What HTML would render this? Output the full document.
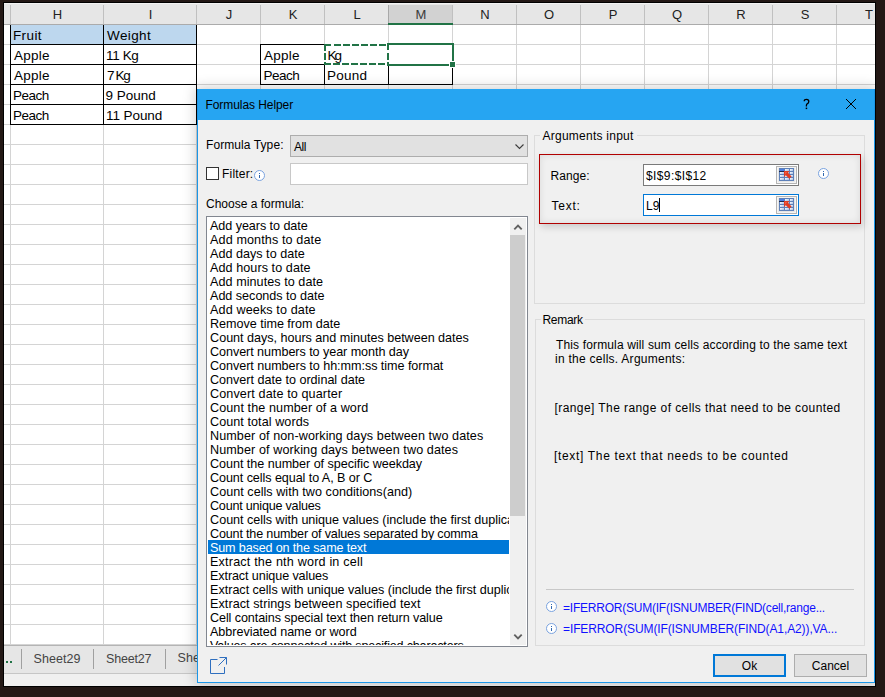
<!DOCTYPE html><html><head><meta charset="utf-8"><style>
html,body{margin:0;padding:0;width:885px;height:697px;overflow:hidden;background:#231815}
body{position:relative;font-family:"Liberation Sans", sans-serif}
body div{position:absolute;box-sizing:border-box}
.t{white-space:pre}
</style></head><body>
<div style="left:4px;top:3px;width:871px;height:683px;background:#fff"></div><div style="left:4px;top:3px;width:871px;height:21px;background:#e6e6e6"></div><div style="left:4px;top:3px;width:871px;height:1px;background:#f3f3f3"></div><div style="left:4px;top:24px;width:871px;height:1px;background:#ababab"></div><div style="left:388px;top:5px;width:65px;height:18px;background:#d2d2d2"></div><div style="left:10px;top:5px;width:1px;height:19px;background:#c0c0c0"></div><div style="left:103px;top:5px;width:1px;height:19px;background:#c0c0c0"></div><div style="left:196px;top:5px;width:1px;height:19px;background:#c0c0c0"></div><div style="left:260px;top:5px;width:1px;height:19px;background:#c0c0c0"></div><div style="left:324px;top:5px;width:1px;height:19px;background:#c0c0c0"></div><div style="left:388px;top:5px;width:1px;height:19px;background:#c0c0c0"></div><div style="left:452px;top:5px;width:1px;height:19px;background:#c0c0c0"></div><div style="left:516px;top:5px;width:1px;height:19px;background:#c0c0c0"></div><div style="left:580px;top:5px;width:1px;height:19px;background:#c0c0c0"></div><div style="left:644px;top:5px;width:1px;height:19px;background:#c0c0c0"></div><div style="left:708px;top:5px;width:1px;height:19px;background:#c0c0c0"></div><div style="left:772px;top:5px;width:1px;height:19px;background:#c0c0c0"></div><div style="left:836px;top:5px;width:1px;height:19px;background:#c0c0c0"></div><div style="left:4px;top:44px;width:871px;height:1px;background:#d4d4d4"></div><div style="left:4px;top:64px;width:871px;height:1px;background:#d4d4d4"></div><div style="left:4px;top:84px;width:871px;height:1px;background:#d4d4d4"></div><div style="left:4px;top:104px;width:871px;height:1px;background:#d4d4d4"></div><div style="left:4px;top:124px;width:871px;height:1px;background:#d4d4d4"></div><div style="left:4px;top:144px;width:871px;height:1px;background:#d4d4d4"></div><div style="left:4px;top:164px;width:871px;height:1px;background:#d4d4d4"></div><div style="left:4px;top:184px;width:871px;height:1px;background:#d4d4d4"></div><div style="left:4px;top:204px;width:871px;height:1px;background:#d4d4d4"></div><div style="left:4px;top:224px;width:871px;height:1px;background:#d4d4d4"></div><div style="left:4px;top:244px;width:871px;height:1px;background:#d4d4d4"></div><div style="left:4px;top:264px;width:871px;height:1px;background:#d4d4d4"></div><div style="left:4px;top:284px;width:871px;height:1px;background:#d4d4d4"></div><div style="left:4px;top:304px;width:871px;height:1px;background:#d4d4d4"></div><div style="left:4px;top:324px;width:871px;height:1px;background:#d4d4d4"></div><div style="left:4px;top:344px;width:871px;height:1px;background:#d4d4d4"></div><div style="left:4px;top:364px;width:871px;height:1px;background:#d4d4d4"></div><div style="left:4px;top:384px;width:871px;height:1px;background:#d4d4d4"></div><div style="left:4px;top:404px;width:871px;height:1px;background:#d4d4d4"></div><div style="left:4px;top:424px;width:871px;height:1px;background:#d4d4d4"></div><div style="left:4px;top:444px;width:871px;height:1px;background:#d4d4d4"></div><div style="left:4px;top:464px;width:871px;height:1px;background:#d4d4d4"></div><div style="left:4px;top:484px;width:871px;height:1px;background:#d4d4d4"></div><div style="left:4px;top:504px;width:871px;height:1px;background:#d4d4d4"></div><div style="left:4px;top:524px;width:871px;height:1px;background:#d4d4d4"></div><div style="left:4px;top:544px;width:871px;height:1px;background:#d4d4d4"></div><div style="left:4px;top:564px;width:871px;height:1px;background:#d4d4d4"></div><div style="left:4px;top:584px;width:871px;height:1px;background:#d4d4d4"></div><div style="left:4px;top:604px;width:871px;height:1px;background:#d4d4d4"></div><div style="left:4px;top:624px;width:871px;height:1px;background:#d4d4d4"></div><div style="left:4px;top:644px;width:871px;height:1px;background:#d4d4d4"></div><div style="left:10px;top:25px;width:1px;height:620px;background:#d4d4d4"></div><div style="left:103px;top:25px;width:1px;height:620px;background:#d4d4d4"></div><div style="left:196px;top:25px;width:1px;height:620px;background:#d4d4d4"></div><div style="left:260px;top:25px;width:1px;height:620px;background:#d4d4d4"></div><div style="left:324px;top:25px;width:1px;height:620px;background:#d4d4d4"></div><div style="left:388px;top:25px;width:1px;height:620px;background:#d4d4d4"></div><div style="left:452px;top:25px;width:1px;height:620px;background:#d4d4d4"></div><div style="left:516px;top:25px;width:1px;height:620px;background:#d4d4d4"></div><div style="left:580px;top:25px;width:1px;height:620px;background:#d4d4d4"></div><div style="left:644px;top:25px;width:1px;height:620px;background:#d4d4d4"></div><div style="left:708px;top:25px;width:1px;height:620px;background:#d4d4d4"></div><div style="left:772px;top:25px;width:1px;height:620px;background:#d4d4d4"></div><div style="left:836px;top:25px;width:1px;height:620px;background:#d4d4d4"></div><div style="left:388px;top:23px;width:65px;height:2px;background:#217346"></div><div style="left:388px;top:5px;width:1px;height:18px;background:#a8a8a8"></div><div class="t" style="left:11px;top:7px;width:93px;text-align:center;font-size:13px;line-height:15px;color:#222">H</div><div class="t" style="left:104px;top:7px;width:93px;text-align:center;font-size:13px;line-height:15px;color:#222">I</div><div class="t" style="left:197px;top:7px;width:64px;text-align:center;font-size:13px;line-height:15px;color:#222">J</div><div class="t" style="left:261px;top:7px;width:64px;text-align:center;font-size:13px;line-height:15px;color:#222">K</div><div class="t" style="left:325px;top:7px;width:64px;text-align:center;font-size:13px;line-height:15px;color:#222">L</div><div class="t" style="left:389px;top:7px;width:64px;text-align:center;font-size:13px;line-height:15px;color:#3a3a3a">M</div><div class="t" style="left:453px;top:7px;width:64px;text-align:center;font-size:13px;line-height:15px;color:#222">N</div><div class="t" style="left:517px;top:7px;width:64px;text-align:center;font-size:13px;line-height:15px;color:#222">O</div><div class="t" style="left:581px;top:7px;width:64px;text-align:center;font-size:13px;line-height:15px;color:#222">P</div><div class="t" style="left:645px;top:7px;width:64px;text-align:center;font-size:13px;line-height:15px;color:#222">Q</div><div class="t" style="left:709px;top:7px;width:64px;text-align:center;font-size:13px;line-height:15px;color:#222">R</div><div class="t" style="left:773px;top:7px;width:64px;text-align:center;font-size:13px;line-height:15px;color:#222">S</div><div class="t" style="left:837px;top:7px;width:64px;text-align:center;font-size:13px;line-height:15px;color:#222">T</div><div style="left:11px;top:25px;width:185px;height:19px;background:#bdd7ee"></div><div style="left:10px;top:25px;width:1px;height:100px;background:#000"></div><div style="left:103px;top:25px;width:1px;height:100px;background:#000"></div><div style="left:196px;top:25px;width:1px;height:100px;background:#000"></div><div style="left:10px;top:44px;width:187px;height:1px;background:#000"></div><div style="left:10px;top:64px;width:187px;height:1px;background:#000"></div><div style="left:10px;top:84px;width:187px;height:1px;background:#000"></div><div style="left:10px;top:104px;width:187px;height:1px;background:#000"></div><div style="left:10px;top:124px;width:187px;height:1px;background:#000"></div><div class="t" id="t0" style="left:13.00px;top:29px;font-size:13.5px;line-height:13.5px;color:#000;letter-spacing:0.375px;">Fruit</div><div class="t" id="t1" style="left:107.00px;top:29px;font-size:13.5px;line-height:13.5px;color:#000;letter-spacing:0.400px;">Weight</div><div class="t" id="t2" style="left:14.00px;top:49px;font-size:13.5px;line-height:13.5px;color:#000;letter-spacing:0.250px;">Apple</div><div class="t" id="t3" style="left:106.00px;top:49px;font-size:13.5px;line-height:13.5px;color:#000;letter-spacing:-0.375px;">11 Kg</div><div class="t" id="t4" style="left:14.00px;top:69px;font-size:13.5px;line-height:13.5px;color:#000;letter-spacing:0.250px;">Apple</div><div class="t" id="t5" style="left:107.00px;top:69px;font-size:13.5px;line-height:13.5px;color:#000;letter-spacing:-1.333px;">7 Kg</div><div class="t" id="t6" style="left:13.00px;top:89px;font-size:13.5px;line-height:13.5px;color:#000;letter-spacing:-0.500px;">Peach</div><div class="t" id="t7" style="left:105.50px;top:89px;font-size:13.5px;line-height:13.5px;color:#000;letter-spacing:-0.000px;">9 Pound</div><div class="t" id="t8" style="left:13.00px;top:109px;font-size:13.5px;line-height:13.5px;color:#000;letter-spacing:-0.500px;">Peach</div><div class="t" id="t9" style="left:106.00px;top:109px;font-size:13.5px;line-height:13.5px;color:#000;letter-spacing:-0.071px;">11 Pound</div><div style="left:260px;top:44px;width:1px;height:41px;background:#000"></div><div style="left:324px;top:44px;width:1px;height:41px;background:#000"></div><div style="left:388px;top:44px;width:1px;height:41px;background:#000"></div><div style="left:452px;top:44px;width:1px;height:41px;background:#000"></div><div style="left:260px;top:44px;width:193px;height:1px;background:#000"></div><div style="left:260px;top:64px;width:193px;height:1px;background:#000"></div><div style="left:260px;top:84px;width:193px;height:1px;background:#000"></div><div class="t" id="t10" style="left:264.00px;top:49px;font-size:13.5px;line-height:13.5px;color:#000;letter-spacing:0.250px;">Apple</div><div class="t" id="t11" style="left:327.50px;top:49px;font-size:13.5px;line-height:13.5px;color:#000;letter-spacing:-2.000px;">Kg</div><div class="t" id="t12" style="left:263.50px;top:69px;font-size:13.5px;line-height:13.5px;color:#000;letter-spacing:-0.500px;">Peach</div><div class="t" id="t13" style="left:327.00px;top:69px;font-size:13.5px;line-height:13.5px;color:#000;letter-spacing:0.250px;">Pound</div><div style="left:324px;top:44px;width:64px;height:2px;background:#fff"></div><div style="left:324px;top:63px;width:64px;height:2px;background:#fff"></div><div style="left:324px;top:44px;width:2px;height:21px;background:#fff"></div><div style="left:387px;top:44px;width:2px;height:21px;background:#fff"></div><div style="left:389px;top:43px;width:65px;height:2px;background:#217346"></div><div style="left:389px;top:64px;width:60px;height:2px;background:#217346"></div><div style="left:452px;top:43px;width:2px;height:18px;background:#217346"></div><div style="left:449px;top:61px;width:7px;height:7px;background:#fff"></div><div style="left:450px;top:62px;width:5px;height:5px;background:#217346"></div><div style="left:324px;top:44px;width:7px;height:2px;background:#217346"></div><div style="left:334px;top:44px;width:7px;height:2px;background:#217346"></div><div style="left:343px;top:44px;width:7px;height:2px;background:#217346"></div><div style="left:352px;top:44px;width:7px;height:2px;background:#217346"></div><div style="left:361px;top:44px;width:7px;height:2px;background:#217346"></div><div style="left:370px;top:44px;width:7px;height:2px;background:#217346"></div><div style="left:379px;top:44px;width:7px;height:2px;background:#217346"></div><div style="left:324px;top:63px;width:7px;height:2px;background:#217346"></div><div style="left:333px;top:63px;width:7px;height:2px;background:#217346"></div><div style="left:342px;top:63px;width:7px;height:2px;background:#217346"></div><div style="left:351px;top:63px;width:7px;height:2px;background:#217346"></div><div style="left:360px;top:63px;width:7px;height:2px;background:#217346"></div><div style="left:369px;top:63px;width:7px;height:2px;background:#217346"></div><div style="left:378px;top:63px;width:7px;height:2px;background:#217346"></div><div style="left:387px;top:63px;width:1px;height:2px;background:#217346"></div><div style="left:324px;top:44px;width:2px;height:7px;background:#217346"></div><div style="left:324px;top:53px;width:2px;height:7px;background:#217346"></div><div style="left:324px;top:62px;width:2px;height:3px;background:#217346"></div><div style="left:387px;top:43px;width:2px;height:7px;background:#217346"></div><div style="left:387px;top:53px;width:2px;height:7px;background:#217346"></div><div style="left:387px;top:62px;width:2px;height:4px;background:#217346"></div><div style="left:4px;top:645px;width:871px;height:1px;background:#b4b4b4"></div><div style="left:4px;top:646px;width:871px;height:27px;background:#e6e6e6"></div><div style="left:4px;top:673px;width:871px;height:1px;background:#c6c6c6"></div><div style="left:4px;top:674px;width:871px;height:12px;background:#f0f0f0"></div><div style="left:21px;top:649px;width:1px;height:20px;background:#a0a0a0"></div><div style="left:93px;top:649px;width:1px;height:20px;background:#a0a0a0"></div><div style="left:165px;top:649px;width:1px;height:20px;background:#a0a0a0"></div><div style="left:6px;top:661px;width:2px;height:2px;background:#217346"></div><div style="left:10px;top:661px;width:2px;height:2px;background:#217346"></div><div class="t" id="t14" style="left:33.50px;top:653px;font-size:12.5px;line-height:12.5px;color:#444;letter-spacing:0.083px;">Sheet29</div><div class="t" id="t15" style="left:106.00px;top:653px;font-size:12.5px;line-height:12.5px;color:#444;letter-spacing:-0.167px;">Sheet27</div><div class="t" style="left:177.50px;top:652px;font-size:12.5px;line-height:12.5px;color:#444;letter-spacing:0.083px">Sheet26</div><div style="left:197px;top:89px;width:678px;height:594px;background:#f0f0f0;box-shadow:0 0 12px 2px rgba(0,0,0,0.18)"></div><div style="left:197px;top:89px;width:678px;height:31px;background:#26a5f2"></div><div style="left:197px;top:89px;width:1px;height:594px;background:#1a96e8"></div><div style="left:874px;top:89px;width:1px;height:594px;background:#1a96e8"></div><div style="left:197px;top:682px;width:678px;height:1px;background:#1a96e8"></div><div class="t" id="t16" style="left:205.50px;top:99px;font-size:12px;line-height:12px;color:#000;letter-spacing:-0.071px;">Formulas Helper</div><svg style="position:absolute;left:800px;top:96px" width="14" height="16"><path d="M4.2 5.2 Q4.3 3.4 6.5 3.4 Q8.8 3.4 8.8 5.6 Q8.8 7.1 7.2 7.9 Q6.4 8.3 6.4 9.4 V10.6" stroke="#000" stroke-width="1.3" fill="none"/><rect x="5.7" y="11.6" width="1.5" height="1.5" fill="#000"/></svg><svg style="position:absolute;left:845px;top:98px" width="12" height="12"><path d="M1 1 L11 11 M11 1 L1 11" stroke="#000" stroke-width="1"/></svg><div class="t" id="t17" style="left:206.00px;top:139px;font-size:12px;line-height:12px;color:#000;letter-spacing:0.083px;">Formula Type:</div><div style="left:290px;top:135px;width:238px;height:22px;background:#e1e1e1;border:1px solid #adadad"></div><div class="t" id="t18" style="left:294.00px;top:141px;font-size:12px;line-height:12px;color:#000;letter-spacing:-0.500px;">All</div><svg style="position:absolute;left:514px;top:143px" width="11" height="7"><path d="M1.5 1.5 L5.5 5.5 L9.5 1.5" stroke="#3c3c3c" stroke-width="1.1" fill="none"/></svg><div style="left:206px;top:167px;width:13px;height:13px;background:#fff;border:1px solid #333"></div><div class="t" style="left:222.00px;top:168px;font-size:12px;line-height:12px;color:#000;letter-spacing:0.2px">Filter:</div><svg style="position:absolute;left:253px;top:169px" width="13" height="13"><circle cx="6.5" cy="6.5" r="5" fill="#fff" stroke="#7aa3e0" stroke-width="1"/><rect x="6" y="4" width="1" height="1" fill="#2f68b0"/><rect x="6" y="6" width="1" height="3" fill="#2f68b0"/></svg><div style="left:290px;top:163px;width:238px;height:22px;background:#fff;border:1px solid #c8c8c8"></div><div class="t" id="t19" style="left:206.00px;top:198px;font-size:12px;line-height:12px;color:#000;letter-spacing:-0.000px;">Choose a formula:</div><div style="left:206px;top:216px;width:322px;height:431px;background:#fff;border:1px solid #828790"></div><div style="left:208px;top:218px;width:301px;height:427px;overflow:hidden"><div class="t" id="t20" style="left:2.00px;top:1px;font-size:12.6px;line-height:14px;color:#000;letter-spacing:-0.062px">Add years to date</div><div class="t" id="t21" style="left:2.00px;top:15px;font-size:12.6px;line-height:14px;color:#000;letter-spacing:0.118px">Add months to date</div><div class="t" id="t22" style="left:2.00px;top:29px;font-size:12.6px;line-height:14px;color:#000;letter-spacing:0.013px">Add days to date</div><div class="t" id="t23" style="left:2.00px;top:43px;font-size:12.6px;line-height:14px;color:#000;letter-spacing:0.069px">Add hours to date</div><div class="t" id="t24" style="left:2.00px;top:57px;font-size:12.6px;line-height:14px;color:#000;letter-spacing:0.056px">Add minutes to date</div><div class="t" id="t25" style="left:2.00px;top:71px;font-size:12.6px;line-height:14px;color:#000;letter-spacing:-0.017px">Add seconds to date</div><div class="t" id="t26" style="left:2.00px;top:85px;font-size:12.6px;line-height:14px;color:#000;letter-spacing:0.125px">Add weeks to date</div><div class="t" id="t27" style="left:2.00px;top:99px;font-size:12.6px;line-height:14px;color:#000;letter-spacing:-0.030px">Remove time from date</div><div class="t" id="list8" style="left:2.10px;top:113px;font-size:12.6px;line-height:14px;color:#000;letter-spacing:-0.024px">Count days, hours and minutes between dates</div><div class="t" id="t28" style="left:2.00px;top:127px;font-size:12.6px;line-height:14px;color:#000;letter-spacing:-0.059px">Convert numbers to year month day</div><div class="t" id="t29" style="left:2.00px;top:141px;font-size:12.6px;line-height:14px;color:#000;letter-spacing:-0.047px">Convert numbers to hh:mm:ss time format</div><div class="t" id="t30" style="left:2.00px;top:155px;font-size:12.6px;line-height:14px;color:#000;letter-spacing:-0.011px">Convert date to ordinal date</div><div class="t" id="t31" style="left:2.00px;top:169px;font-size:12.6px;line-height:14px;color:#000;letter-spacing:0.118px">Convert date to quarter</div><div class="t" id="t32" style="left:2.00px;top:183px;font-size:12.6px;line-height:14px;color:#000;letter-spacing:0.084px">Count the number of a word</div><div class="t" id="t33" style="left:2.00px;top:197px;font-size:12.6px;line-height:14px;color:#000;letter-spacing:0.063px">Count total words</div><div class="t" id="t34" style="left:2.00px;top:211px;font-size:12.6px;line-height:14px;color:#000;letter-spacing:0.086px">Number of non-working days between two dates</div><div class="t" id="t35" style="left:2.00px;top:225px;font-size:12.6px;line-height:14px;color:#000;letter-spacing:0.095px">Number of working days between two dates</div><div class="t" id="t36" style="left:2.00px;top:239px;font-size:12.6px;line-height:14px;color:#000;letter-spacing:-0.040px">Count the number of specific weekday</div><div class="t" id="t37" style="left:2.00px;top:253px;font-size:12.6px;line-height:14px;color:#000;letter-spacing:-0.076px">Count cells equal to A, B or C</div><div class="t" id="t38" style="left:2.00px;top:267px;font-size:12.6px;line-height:14px;color:#000;letter-spacing:0.037px">Count cells with two conditions(and)</div><div class="t" id="t39" style="left:2.00px;top:281px;font-size:12.6px;line-height:14px;color:#000;letter-spacing:-0.222px">Count unique values</div><div class="t" style="left:2.10px;top:295px;font-size:12.6px;line-height:14px;color:#000;letter-spacing:-0.024px">Count cells with unique values (include the first duplicate)</div><div class="t" id="t40" style="left:2.00px;top:309px;font-size:12.6px;line-height:14px;color:#000;letter-spacing:-0.180px">Count the number of values separated by comma</div><div style="left:0;top:322px;width:301px;height:14px;background:#0078d7"></div><div class="t" id="t41" style="left:2.00px;top:323px;font-size:12.6px;line-height:14px;color:#fff;letter-spacing:-0.152px">Sum based on the same text</div><div class="t" id="t42" style="left:2.00px;top:337px;font-size:12.6px;line-height:14px;color:#000;letter-spacing:0.185px">Extract the nth word in cell</div><div class="t" id="t43" style="left:2.00px;top:351px;font-size:12.6px;line-height:14px;color:#000;letter-spacing:-0.105px">Extract unique values</div><div class="t" style="left:2.10px;top:365px;font-size:12.6px;line-height:14px;color:#000;letter-spacing:-0.024px">Extract cells with unique values (include the first duplicate)</div><div class="t" id="t44" style="left:2.00px;top:379px;font-size:12.6px;line-height:14px;color:#000;letter-spacing:0.068px">Extract strings between specified text</div><div class="t" id="t45" style="left:2.00px;top:393px;font-size:12.6px;line-height:14px;color:#000;letter-spacing:-0.091px">Cell contains special text then return value</div><div class="t" id="t46" style="left:2.00px;top:407px;font-size:12.6px;line-height:14px;color:#000;letter-spacing:-0.043px">Abbreviated name or word</div><div class="t" id="t47" style="left:2.00px;top:421px;font-size:12.6px;line-height:14px;color:#000;letter-spacing:-0.189px">Values are connected with specified characters</div></div><div style="left:510px;top:218px;width:16px;height:427px;background:#f0f0f0"></div><div style="left:510px;top:235px;width:15px;height:281px;background:#cdcdcd"></div><svg style="position:absolute;left:512px;top:223px" width="12" height="8"><path d="M2.3 6.3 L6 2.6 L9.7 6.3" stroke="#606060" stroke-width="1.9" fill="none"/></svg><svg style="position:absolute;left:512px;top:633px" width="12" height="8"><path d="M2.3 1.7 L6 5.4 L9.7 1.7" stroke="#606060" stroke-width="1.9" fill="none"/></svg><div style="left:534px;top:135px;width:331px;height:169px;border:1px solid #dcdcdc"></div><div style="left:540px;top:130px;width:97px;height:12px;background:#f0f0f0"></div><div class="t" id="t48" style="left:542.50px;top:130px;font-size:12px;line-height:12px;color:#000;letter-spacing:0.250px;">Arguments input</div><div style="left:539px;top:154px;width:322px;height:70px;border:1px solid #b00000;box-shadow:2px 3px 7px rgba(0,0,0,0.16), inset 0 0 7px rgba(0,0,0,0.10)"></div><div class="t" id="t49" style="left:550.50px;top:170px;font-size:12px;line-height:12px;color:#000;letter-spacing:0.100px;">Range:</div><div class="t" id="t50" style="left:551.50px;top:200px;font-size:12px;line-height:12px;color:#000;letter-spacing:0.750px;">Text:</div><div style="left:643px;top:164px;width:156px;height:22px;background:#fff;border:1px solid #7a7a7a"></div><div style="left:643px;top:194px;width:156px;height:22px;background:#fff;border:1px solid #0078d7"></div><div class="t" id="t51" style="left:646.00px;top:170px;font-size:12px;line-height:12px;color:#000;letter-spacing:0.389px;">$I$9:$I$12</div><div class="t" style="left:646.00px;top:200px;font-size:12px;line-height:12px;color:#000;">L9</div><div style="left:659px;top:198px;width:1px;height:14px;background:#000"></div><div style="left:776px;top:166px;width:21px;height:18px;background:#e6e6e6;border:1px solid #b4b4b4;box-shadow:inset 0 0 0 1px #f4f4f4"></div><svg style="position:absolute;left:779px;top:168px" width="15" height="13"><defs><linearGradient id="cg" x1="0" y1="0" x2="1" y2="1"><stop offset="0" stop-color="#ffffff"/><stop offset="1" stop-color="#a0bae2"/></linearGradient></defs><rect x="0" y="0" width="15" height="13" fill="#5d80b9"/><rect x="1" y="1" width="4" height="2" fill="#4a7de0"/><rect x="0" y="3" width="5" height="1" fill="#1c2a4c"/><rect x="1" y="4" width="4" height="2" fill="url(#cg)"/><rect x="1" y="7" width="4" height="2" fill="url(#cg)"/><rect x="1" y="10" width="4" height="2" fill="url(#cg)"/><rect x="6" y="1" width="4" height="2" fill="url(#cg)"/><rect x="6" y="4" width="4" height="2" fill="url(#cg)"/><rect x="6" y="7" width="4" height="2" fill="url(#cg)"/><rect x="6" y="10" width="4" height="2" fill="url(#cg)"/><rect x="11" y="1" width="3" height="2" fill="url(#cg)"/><rect x="11" y="4" width="3" height="2" fill="url(#cg)"/><rect x="11" y="7" width="3" height="2" fill="url(#cg)"/><rect x="11" y="10" width="3" height="2" fill="url(#cg)"/><path d="M5 3 L10.6 3 L9 4.8 L12.6 8.6 L10.4 10.8 L6.8 7.2 L5 9 Z" fill="#e03c22"/><path d="M6 4 L8.5 4 L6 6.5 Z" fill="#f07050" opacity="0.7"/></svg><div style="left:776px;top:196px;width:21px;height:18px;background:#e6e6e6;border:1px solid #b4b4b4;box-shadow:inset 0 0 0 1px #f4f4f4"></div><svg style="position:absolute;left:779px;top:198px" width="15" height="13"><defs><linearGradient id="cg" x1="0" y1="0" x2="1" y2="1"><stop offset="0" stop-color="#ffffff"/><stop offset="1" stop-color="#a0bae2"/></linearGradient></defs><rect x="0" y="0" width="15" height="13" fill="#5d80b9"/><rect x="1" y="1" width="4" height="2" fill="#4a7de0"/><rect x="0" y="3" width="5" height="1" fill="#1c2a4c"/><rect x="1" y="4" width="4" height="2" fill="url(#cg)"/><rect x="1" y="7" width="4" height="2" fill="url(#cg)"/><rect x="1" y="10" width="4" height="2" fill="url(#cg)"/><rect x="6" y="1" width="4" height="2" fill="url(#cg)"/><rect x="6" y="4" width="4" height="2" fill="url(#cg)"/><rect x="6" y="7" width="4" height="2" fill="url(#cg)"/><rect x="6" y="10" width="4" height="2" fill="url(#cg)"/><rect x="11" y="1" width="3" height="2" fill="url(#cg)"/><rect x="11" y="4" width="3" height="2" fill="url(#cg)"/><rect x="11" y="7" width="3" height="2" fill="url(#cg)"/><rect x="11" y="10" width="3" height="2" fill="url(#cg)"/><path d="M5 3 L10.6 3 L9 4.8 L12.6 8.6 L10.4 10.8 L6.8 7.2 L5 9 Z" fill="#e03c22"/><path d="M6 4 L8.5 4 L6 6.5 Z" fill="#f07050" opacity="0.7"/></svg><svg style="position:absolute;left:817px;top:167px" width="13" height="13"><circle cx="6.5" cy="6.5" r="5" fill="#fff" stroke="#7aa3e0" stroke-width="1"/><rect x="6" y="4" width="1" height="1" fill="#2f68b0"/><rect x="6" y="6" width="1" height="3" fill="#2f68b0"/></svg><div style="left:535px;top:319px;width:330px;height:327px;border:1px solid #dcdcdc"></div><div style="left:541px;top:313px;width:44px;height:12px;background:#f0f0f0"></div><div class="t" id="t52" style="left:542.50px;top:314px;font-size:12px;line-height:12px;color:#000;letter-spacing:-0.300px;">Remark</div><div class="t" id="t53" style="left:556.00px;top:339px;font-size:12px;line-height:12px;color:#000;letter-spacing:0.142px;">This formula will sum cells according to the same text</div><div class="t" id="t54" style="left:555.00px;top:353px;font-size:12px;line-height:12px;color:#000;letter-spacing:0.261px;">in the cells. Arguments:</div><div class="t" id="t55" style="left:554.50px;top:402px;font-size:12px;line-height:12px;color:#000;letter-spacing:0.418px;">[range] The range of cells that need to be counted</div><div class="t" id="t56" style="left:554.00px;top:450px;font-size:12px;line-height:12px;color:#000;letter-spacing:0.667px;">[text] The text that needs to be counted</div><div style="left:546px;top:589px;width:308px;height:1px;background:#c8c8c8"></div><svg style="position:absolute;left:545px;top:600px" width="13" height="13"><circle cx="6.5" cy="6.5" r="5" fill="#fff" stroke="#7aa3e0" stroke-width="1"/><rect x="6" y="4" width="1" height="1" fill="#2f68b0"/><rect x="6" y="6" width="1" height="3" fill="#2f68b0"/></svg><svg style="position:absolute;left:545px;top:622px" width="13" height="13"><circle cx="6.5" cy="6.5" r="5" fill="#fff" stroke="#7aa3e0" stroke-width="1"/><rect x="6" y="4" width="1" height="1" fill="#2f68b0"/><rect x="6" y="6" width="1" height="3" fill="#2f68b0"/></svg><div class="t" id="t57" style="left:563.00px;top:602px;font-size:12px;line-height:12px;color:#1010ff;letter-spacing:-0.226px;">=IFERROR(SUM(IF(ISNUMBER(FIND(cell,range...</div><div class="t" id="t58" style="left:563.00px;top:623px;font-size:12px;line-height:12px;color:#1010ff;letter-spacing:-0.107px;">=IFERROR(SUM(IF(ISNUMBER(FIND(A1,A2)),VA...</div><div style="left:713px;top:654px;width:73px;height:23px;background:#e1e1e1;border:2px solid #0078d7"></div><div class="t" style="left:713px;top:659px;width:73px;text-align:center;font-size:12px;line-height:14px">Ok</div><div style="left:794px;top:654px;width:73px;height:23px;background:#e1e1e1;border:1px solid #adadad"></div><div class="t" style="left:794px;top:659px;width:73px;text-align:center;font-size:12px;line-height:14px">Cancel</div><svg style="position:absolute;left:208px;top:655px" width="22" height="22"><g stroke="#2f6fbf" stroke-width="1" fill="none"><path d="M9.5 4.5 H2.5 V18.5 H16.5 V12"/><path d="M10.5 10.5 L18.5 2.5 M11.5 2.5 H18.5 V9.5"/></g></svg><div style="left:0px;top:0px;width:885px;height:2px;background:#231815"></div><div style="left:0px;top:0px;width:3px;height:697px;background:#231815"></div><div style="left:876px;top:0px;width:9px;height:697px;background:#231815"></div><div style="left:0px;top:687px;width:885px;height:10px;background:#231815"></div><div style="left:3px;top:2px;width:873px;height:1px;background:#000"></div><div style="left:3px;top:2px;width:1px;height:685px;background:#000"></div><div style="left:875px;top:2px;width:1px;height:685px;background:#000"></div><div style="left:3px;top:686px;width:873px;height:1px;background:#000"></div>
</body></html>
